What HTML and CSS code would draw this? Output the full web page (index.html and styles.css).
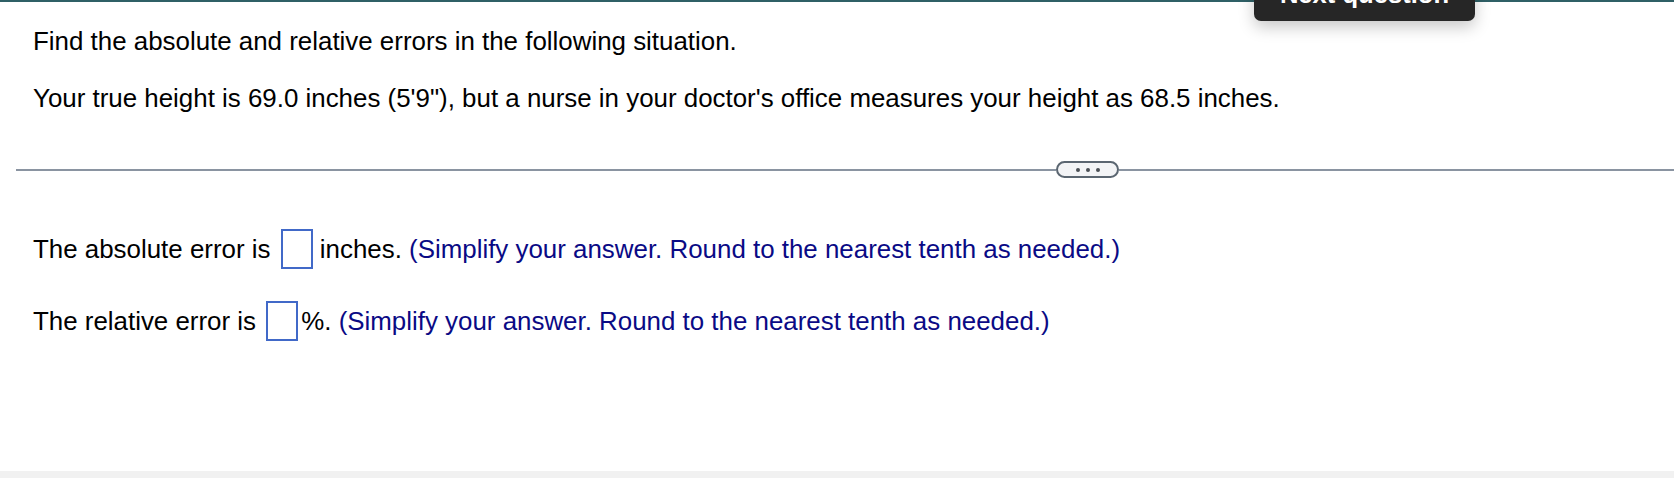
FILE: index.html
```html
<!DOCTYPE html>
<html lang="en">
<head>
<meta charset="utf-8">
<title>Absolute and relative errors</title>
<link rel="stylesheet" href="styles.css">
</head>
<body>
<div class="page">
  <header class="topbar">
    <button class="next-btn" type="button"><span>Next question</span></button>
  </header>
  <main class="content">
    <p class="q-line">Find the absolute and relative errors in the following situation.</p>
    <p class="q-line q-second">Your true height is 69.0 inches (5'9"), but a nurse in your doctor's office measures your height as 68.5 inches.</p>

    <div class="separator">
      <span class="sep-line sep-left"></span>
      <span class="pill"><i class="dot"></i><i class="dot"></i><i class="dot"></i></span>
      <span class="sep-line sep-right"></span>
    </div>

    <p class="answer-row row-abs">The absolute error is <span class="answer-box"></span> inches. <span class="hint">(Simplify your answer. Round to the nearest tenth as needed.)</span></p>
    <p class="answer-row row-rel">The relative error is <span class="answer-box"></span>%. <span class="hint">(Simplify your answer. Round to the nearest tenth as needed.)</span></p>
  </main>
  <footer class="footer"></footer>
</div>
</body>
</html>
```

FILE: styles.css
```css
html, body {
  margin: 0;
  padding: 0;
  background: #ffffff;
}

body {
  font-family: "Liberation Sans", Arial, Helvetica, sans-serif;
  font-size: 25.9px;
  color: #000000;
}

.page {
  height: 478px;
  display: flex;
  flex-direction: column;
  overflow: hidden;
}

.topbar {
  position: relative;
  height: 2px;
  background: #2f6066;
  flex: none;
}

.next-btn {
  position: absolute;
  left: 1254px;
  top: -25px;
  width: 221px;
  height: 46px;
  margin: 0;
  padding: 0 0 12px 0;
  border: none;
  border-radius: 7px;
  background: #262626;
  color: #ffffff;
  font-family: "Liberation Sans", Arial, Helvetica, sans-serif;
  font-size: 25.6px;
  font-weight: bold;
  line-height: 30px;
  display: flex;
  align-items: flex-end;
  justify-content: center;
  box-shadow: 0 6px 16px rgba(0, 0, 0, 0.22);
  z-index: 2;
}

.content {
  flex: 1;
  padding: 24px 0 0 0;
}

.q-line {
  margin: 0;
  padding-left: 33px;
  line-height: 30px;
}

.q-second {
  margin-top: 27px;
}

.separator {
  margin-top: 48px;
  margin-left: 16px;
  height: 17px;
  display: flex;
  align-items: center;
}

.sep-line {
  height: 2px;
  background: #8a94a1;
}

.sep-left {
  width: 1040px;
  flex: none;
}

.sep-right {
  flex: 1;
}

.pill {
  flex: none;
  box-sizing: border-box;
  width: 63px;
  height: 17px;
  border: 2px solid #5b6671;
  border-radius: 9px;
  background: #f3f4f6;
  display: flex;
  align-items: center;
  justify-content: center;
  gap: 6px;
}

.dot {
  width: 4px;
  height: 4px;
  border-radius: 50%;
  background: #4a4f55;
}

.answer-row {
  margin: 0;
  padding-left: 33px;
  line-height: 30px;
}

.row-abs {
  margin-top: 51px;
}

.row-rel {
  margin-top: 32px;
}

.answer-box {
  display: inline-block;
  box-sizing: border-box;
  width: 32px;
  height: 40px;
  border: 2px solid #4169c8;
  background: #ffffff;
  vertical-align: -11px;
  margin-left: 3px;
}

.row-rel .answer-box {
  margin-right: 3px;
}

.hint {
  color: #0a0a85;
}

.footer {
  flex: none;
  height: 7px;
  background: #f1f1f1;
}
```
